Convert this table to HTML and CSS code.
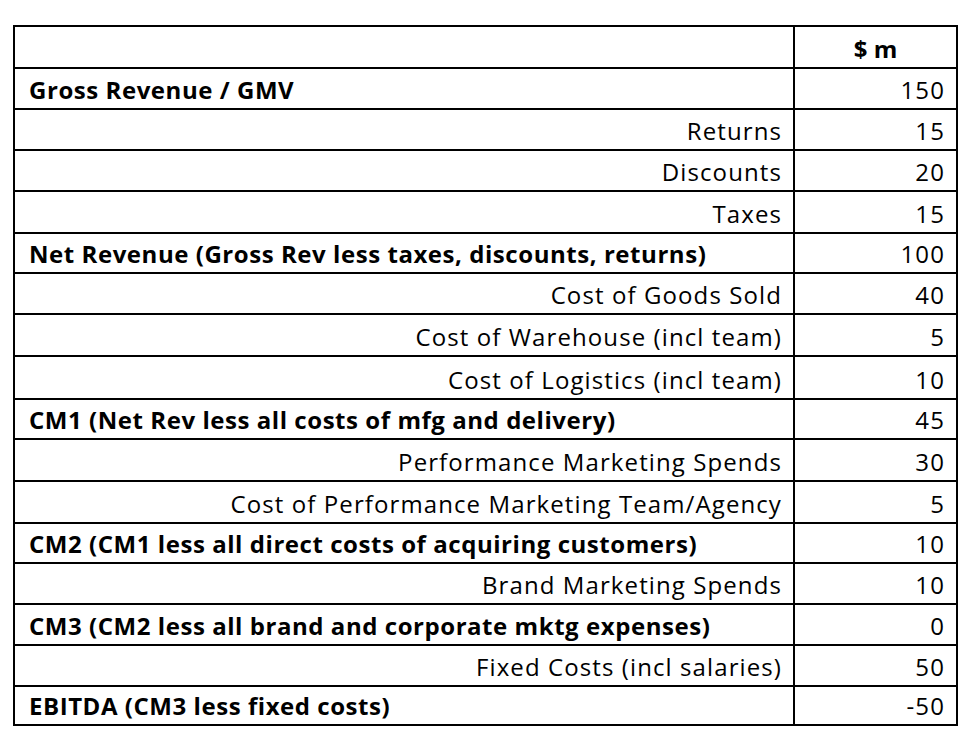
FILE: index.html
```html
<!DOCTYPE html>
<html>
<head>
<meta charset="utf-8">
<link rel="stylesheet" href="styles.css">
</head>
<body>
<table class="pl">
  <tr class="h42"><td class="label"></td><td class="val hdr">$ m</td></tr>
  <tr class="h41"><td class="label b">Gross Revenue / GMV</td><td class="val">150</td></tr>
  <tr class="h41"><td class="label r">Returns</td><td class="val">15</td></tr>
  <tr class="h41"><td class="label r">Discounts</td><td class="val">20</td></tr>
  <tr class="h42"><td class="label r">Taxes</td><td class="val">15</td></tr>
  <tr class="h40"><td class="label b">Net Revenue (Gross Rev less taxes, discounts, returns)</td><td class="val">100</td></tr>
  <tr class="h41"><td class="label r">Cost of Goods Sold</td><td class="val">40</td></tr>
  <tr class="h42"><td class="label r">Cost of Warehouse (incl team)</td><td class="val">5</td></tr>
  <tr class="h43"><td class="label r">Cost of Logistics (incl team)</td><td class="val">10</td></tr>
  <tr class="h40"><td class="label b">CM1 (Net Rev less all costs of mfg and delivery)</td><td class="val">45</td></tr>
  <tr class="h42"><td class="label r">Performance Marketing Spends</td><td class="val">30</td></tr>
  <tr class="h42"><td class="label r">Cost of Performance Marketing Team/Agency</td><td class="val">5</td></tr>
  <tr class="h40"><td class="label b">CM2 (CM1 less all direct costs of acquiring customers)</td><td class="val">10</td></tr>
  <tr class="h41"><td class="label r">Brand Marketing Spends</td><td class="val">10</td></tr>
  <tr class="h41"><td class="label b">CM3 (CM2 less all brand and corporate mktg expenses)</td><td class="val">0</td></tr>
  <tr class="h41"><td class="label r">Fixed Costs (incl salaries)</td><td class="val">50</td></tr>
  <tr class="h39"><td class="label b">EBITDA (CM3 less fixed costs)</td><td class="val">-50</td></tr>
</table>
</body>
</html>
```
FILE: styles.css
```css
html, body {
  margin: 0;
  padding: 0;
  background: #ffffff;
}
body {
  padding: 25px 0 0 13px;
  font-family: "Open Sans", "Liberation Sans", sans-serif;
  color: #000;
}
.pl {
  border-collapse: separate;
  border-spacing: 0;
  border-top: 2px solid #000;
  border-left: 2px solid #000;
  font-size: 24px;
}
.pl td {
  border-right: 2px solid #000;
  border-bottom: 2px solid #000;
  padding: 0 11px 6px 14px;
  box-sizing: border-box;
  vertical-align: bottom;
  white-space: nowrap;
  line-height: 24px;
  letter-spacing: 1.1px;
}
.h39 td { height: 39px; }
.h40 td { height: 40px; }
.h41 td { height: 41px; }
.h42 td { height: 42px; }
.h43 td { height: 43px; }
.label { width: 780px; text-align: left; }
.label.r { text-align: right; }
.label.b { font-weight: 700; letter-spacing: 0.55px; }
.val { width: 163px; text-align: right; }
.val.hdr { text-align: center; font-weight: 700; padding-left: 12px; padding-right: 12px; letter-spacing: 0; }
```
